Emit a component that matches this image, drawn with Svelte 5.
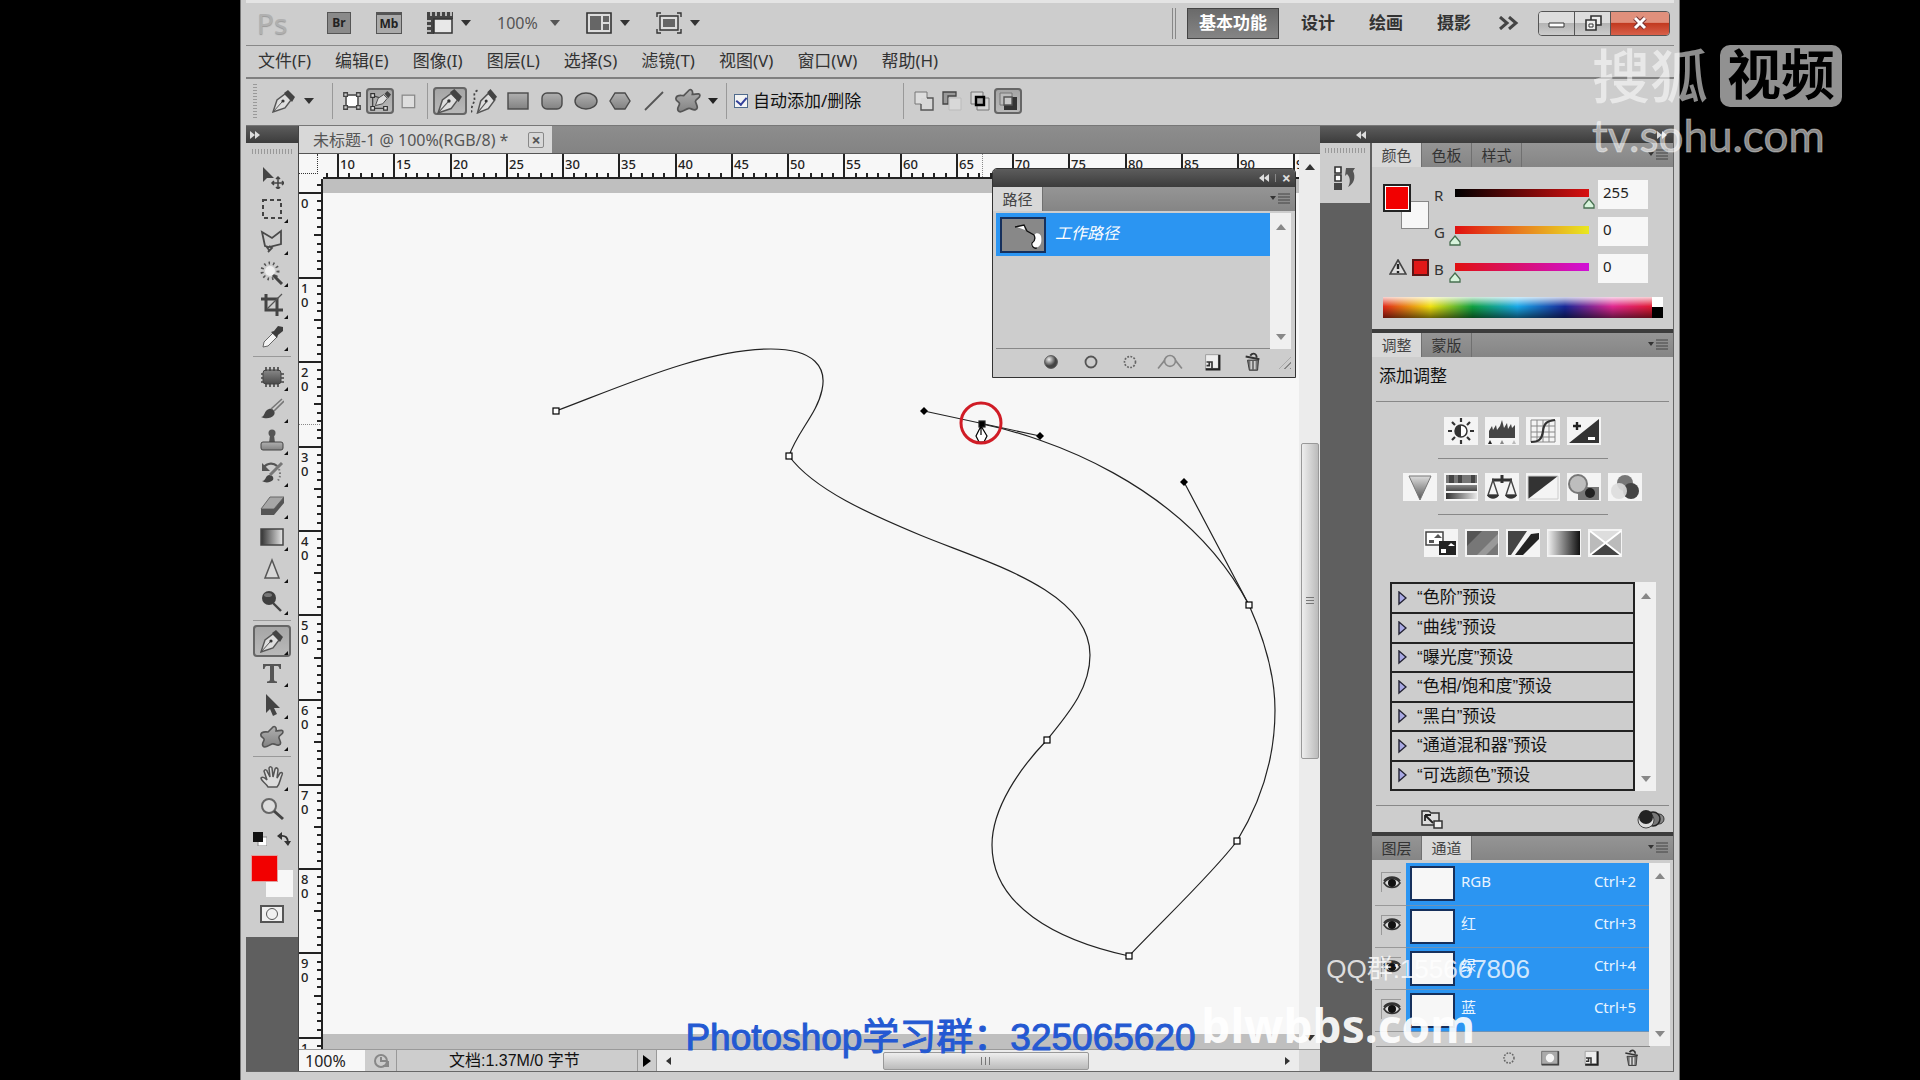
<script>
  const icons = {
    move: '<path d="M3 2v15l4-4 7 0z" fill="#444"/><path d="M18 12v12M12 18h12M16 14l2-2 2 2M16 22l2 2 2-2M14 16l-2 2 2 2M22 16l2 2-2 2" fill="none" stroke="#444" stroke-width="1.5"/>',
    marquee: '<rect x="3" y="3" width="18" height="18" fill="none" stroke="#444" stroke-width="2" stroke-dasharray="4 3"/>',
    lasso: '<path d="M2 3l10 6 9-7v13l-12 3-4-1z M9 17l3 2-4 4M6 17l3 4" fill="none" stroke="#4a4a4a" stroke-width="1.8"/>',
    wand: '<circle cx="10" cy="10" r="8" fill="none" stroke="#555" stroke-width="3" stroke-dasharray="1.5 3"/><circle cx="10" cy="10" r="5" fill="#eee"/><path d="M13 14l9 9" stroke="#444" stroke-width="3"/>',
    crop: '<path d="M6 1v16h17M1 6h16v17" fill="none" stroke="#444" stroke-width="3"/><path d="M7 16L22 1" stroke="#555" stroke-width="1.3"/>',
    dropper: '<path d="M3 22l1-5 9-9 4 4-9 9z" fill="#f4f4f4" stroke="#666"/><path d="M11 7l3-1 4-5 5 1 0 4-5 4-1 3z" fill="#3d3d3d"/>',
    heal: '<rect x="3" y="5" width="18" height="14" rx="3" fill="url(#dark)" stroke="#444"/><path d="M6 2v4M10 2v4M14 2v4M18 2v4M6 18v4M10 18v4M14 18v4M18 18v4M1 9h2M1 13h2M1 17h2M21 9h3M21 13h3M21 17h3" stroke="#444" stroke-width="1.6"/>',
    brush: '<path d="M1 20c4 0 3-7 8-8 4-1 7 3 5 6-3 4-9 4-13 2z" fill="#444"/><path d="M11 12L22 2M14 14L24 4" stroke="#777" stroke-width="1.6"/>',
    stamp: '<circle cx="12" cy="4" r="3.5" fill="#555"/><path d="M10 6h4l1 8H9z" fill="#555"/><rect x="1" y="13" width="22" height="8" rx="2" fill="url(#mid)" stroke="#444"/>',
    history: '<path d="M2 20c4 0 3-5 7-6 4 0 5 3 4 5-3 3-8 3-11 1z" fill="#444"/><path d="M10 14L22 2" stroke="#777" stroke-width="3"/><path d="M3 7c5-6 11-5 14-2" fill="none" stroke="#555" stroke-width="2.4"/><path d="M2 2v8h8z" fill="#555"/><path d="M19 8c2 6 1 9-2 13" fill="none" stroke="#777" stroke-width="2" stroke-dasharray="1.5 2"/>',
    eraser: '<path d="M10 4h14l-10 12H1z" fill="#a6a6a6" stroke="#666"/><path d="M1 16h13v6H1zM14 16L24 4v6L14 22z" fill="#555"/>',
    gradient: '<rect x="1" y="4" width="22" height="16" fill="url(#fadeX)" stroke="#444" stroke-width="1.5"/>',
    blur: '<path d="M12 3l7 18H5z" fill="#d8d8d8" stroke="#555" stroke-width="1.5"/>',
    dodge: '<circle cx="9" cy="9" r="7" fill="#3f3f3f"/><path d="M13 14l8 8" stroke="#444" stroke-width="2.4"/><ellipse cx="8" cy="6" rx="4" ry="2" fill="#777"/>',
    pen: '<path d="M1 23l4-12 8-6 6 6-6 8z" fill="#dedede" stroke="#555" stroke-width="1.4"/><path d="M1 23l9-10" stroke="#555"/><circle cx="11" cy="12" r="1.6" fill="#333"/><path d="M12 4l4-3 7 7-3 5z" fill="#444"/>',
    freepen: '<path d="M6 23l3-11 7-7 6 6-6 8z" fill="#dedede" stroke="#555" stroke-width="1.4"/><path d="M6 23l8-10" stroke="#555"/><circle cx="14" cy="12" r="1.4" fill="#333"/><path d="M15 4l3-3 6 7-3 4z" fill="#444"/><path d="M6 2C1 5 4 9 3 12s-4 8-2 11" fill="none" stroke="#444" stroke-width="1.6" stroke-dasharray="2 2"/>',
    type: '<path d="M3 3h18v5h-1.5c-.5-2.500-1-3-3-3H14v13c0 2 .5 2 3 2.500V22H7v-1.500c2.500-.5 3-.5 3-2.500V5H7.500c-2 0-2.500.5-3 3H3z" fill="#555"/>',
    arrow: '<path d="M6 1v19l4-4 3 7 4-2-3-6h6z" fill="#444"/>',
    blob: '<path d="M12 3c2-3 5-1 4 3 3 0 7-2 7 1s-5 3-4 6 3 6 0 7-4-2-7-1-7 5-9 2 2-5 1-7-4-2-3-5 4-2 7-2z" fill="url(#mid)" stroke="#555" stroke-width="1.6"/>',
    hand: '<path d="M8 22c-2-4-7-6-7-9 2-2 4 0 6 2L4 6c1-2 3-1 3 0l3 6-1-9c1-2 3-1 3 0l1 9 2-8c1-2 3-1 3 1l-1 8 3-5c2-1 3 0 2 2-2 4-2 9-5 12z" fill="#ddd" stroke="#555" stroke-width="1.5"/>',
    zoom: '<circle cx="9" cy="9" r="7" fill="#ddd" stroke="#666" stroke-width="2"/><path d="M14 14l9 8" stroke="#444" stroke-width="3"/>',
    shapeLayer: '<rect x="6" y="6" width="12" height="12" fill="#fff" stroke="#666"/><path d="M3 3h4v4H3zM17 3h4v4h-4zM3 17h4v4H3zM17 17h4v4h-4z" fill="#ccc" stroke="#444" stroke-width="1.4"/><path d="M7 5h10M7 19h10M5 7v10M19 7v10" stroke="#555"/>',
    paths: '<path d="M4 6v14h14M4 6l12 4" fill="none" stroke="#444" stroke-width="1.4"/><path d="M2 4h4v4H2zM2 18h4v4H2zM16 18h4v4h-4z" fill="#ddd" stroke="#333" stroke-width="1.3"/><path d="M7 17l3-8 6-4 4 4-5 6z" fill="#ddd" stroke="#444"/><path d="M17 4l3-3 4 4-3 4z" fill="#444"/>',
    pixels: '<rect x="5" y="5" width="15" height="15" fill="#dedede" stroke="#888" stroke-width="1.5"/>',
    rect: '<rect x="2" y="4" width="20" height="16" fill="url(#mid)" stroke="#4a4a4a" stroke-width="1.4"/>',
    rrect: '<rect x="2" y="4" width="20" height="16" rx="5" fill="url(#mid)" stroke="#4a4a4a" stroke-width="1.4"/>',
    ellipse: '<ellipse cx="12" cy="12" rx="11" ry="8" fill="url(#mid)" stroke="#4a4a4a" stroke-width="1.4"/>',
    polygon: '<path d="M7 4h10l5 8-5 8H7l-5-8z" fill="url(#mid)" stroke="#4a4a4a" stroke-width="1.4"/>',
    line: '<path d="M3 21L21 3" stroke="#555" stroke-width="1.8"/>',
    add: '<path d="M3 3h12v12H3z" fill="#ddd" stroke="#777"/><path d="M9 9h12v12H9z" fill="#d8d8d8"/><path d="M15 9h6v12H9v-6" fill="none" stroke="#555" stroke-width="1.4"/>',
    subtract: '<path d="M3 15V3h13v4H8v8z" fill="#999" stroke="#444" stroke-width="1.3"/><path d="M9 9h12v12H9z" fill="#d8d8d8" stroke="#bbb"/>',
    intersect: '<path d="M3 3h12v12H3zM9 9h12v12H9z" fill="#d4d4d4" stroke="#777"/><path d="M8 8h8v8H8z" fill="#aaa" stroke="#000" stroke-width="2.4"/>',
    exclude: '<path d="M4 4h12v12H4z" fill="#bbb" stroke="#777"/><path d="M16 8h5v13H8v-5h8z" fill="#333"/><path d="M8 8h8v8H8z" fill="#c8c8c8" stroke="#555" stroke-width="1.4"/>',
    ball: '<circle cx="12" cy="12" r="7" fill="url(#ball)" stroke="#555"/>',
    ring: '<circle cx="12" cy="12" r="6" fill="#ccc" stroke="#555" stroke-width="2"/>',
    dotted: '<circle cx="12" cy="12" r="6" fill="none" stroke="#666" stroke-width="1.8" stroke-dasharray="2 1.5"/>',
    work: '<path d="M1 18L9 8h6l8 10" fill="none" stroke="#888" stroke-width="1.6"/><circle cx="12" cy="11" r="5" fill="#ccc" stroke="#888" stroke-width="1.5"/>',
    mask: '<path d="M2 4h20v16H2z" fill="#aaa" stroke="#666"/><path d="M2 20h20V4" fill="none" stroke="#444" stroke-width="2"/><circle cx="12" cy="12" r="5" fill="#f4f4f4"/>',
    page: '<path d="M5 4h14v15H5z" fill="#eee" stroke="#999"/><path d="M20 4v16H5" fill="none" stroke="#222" stroke-width="2.4"/><path d="M6 12h6v7M9 12v4H6" fill="none" stroke="#333" stroke-width="1.8"/>',
    trash: '<path d="M4 6l15 3M9 5c3-4 7-2 7 2" stroke="#333" stroke-width="2" fill="none"/><path d="M6 10h12l-1 11H8z" fill="#777" stroke="#333"/><path d="M10 11v9M14 11v9" stroke="#ddd" stroke-width="1.5"/>',
  };

  // adjustment buttons are drawn on a 34x28 tile
  const adjustRows = [
    [
      ['亮度/对比度', '<circle cx="17" cy="14" r="6" fill="#fff" stroke="#333" stroke-width="1.5"/><path d="M17 8a6 6 0 0 0 0 12z" fill="#333"/><path d="M17 1v4M17 23v4M4 14h4M26 14h4M8 5l3 3M23 20l3 3M26 5l-3 3M11 20l-3 3" stroke="#333" stroke-width="2.2"/>'],
      ['色阶', '<path d="M4 21V14l3-5 1 4 3-5 1 5 3-4 2-6 2 8 3-5 1 6 3-5 1 4 3-3v13z" fill="#444"/><path d="M3 27l2-4 2 4z" fill="#222"/><path d="M15 27l2-4 2 4z" fill="#888"/><path d="M27 27l2-4 2 4z" fill="#bbb"/>'],
      ['曲线', '<path d="M5 3h24v22H5zM11 3v22M17 3v22M23 3v22M5 9h24M5 15h24M5 20h24" fill="none" stroke="#888"/><path d="M5 25c8 0 11-3 12-11s4-10 12-11" fill="none" stroke="#333" stroke-width="2.2"/>'],
      ['曝光度', '<path d="M32 2v24H2z" fill="#333"/><path d="M6 9h8M10 5v8" stroke="#222" stroke-width="2.4"/><path d="M21 20h7v3h-7z" fill="#fff"/>'],
    ],
    [
      ['自然饱和度', '<path d="M6 3h22L17 27z" fill="url(#vib)" stroke="#777"/>'],
      ['色相/饱和度', '<path d="M2 2h31v8H2z" fill="#777"/><path d="M5 2h5v8H5zM14 2h4v8h-4zM27 2h4v8h-4z" fill="#444"/><path d="M2 12h31v6H2z" fill="url(#dark)"/><path d="M2 20h31v6H2z" fill="url(#fadeX)"/>'],
      ['色彩平衡', '<path d="M17 2v8M7 7h20" stroke="#333" stroke-width="3"/><path d="M8 7L3 22h10zM26 7l-5 15h10z" fill="none" stroke="#444" stroke-width="1.4"/><path d="M2 22h12c-2 5-10 5-12 0zM20 22h12c-2 5-10 5-12 0z" fill="#333"/>'],
      ['黑白', '<path d="M2 3h30L2 26z" fill="#333"/><path d="M2 3h30v23H2z" fill="none" stroke="#ccc"/>'],
      ['照片滤镜', '<path d="M11 14h21v13H11z" fill="#777"/><circle cx="23" cy="20" r="5" fill="#222"/><circle cx="11" cy="11" r="9" fill="#bdbdbd" stroke="#777" stroke-width="2"/>'],
      ['通道混和器', '<circle cx="17" cy="10" r="8" fill="#777"/><circle cx="23" cy="18" r="8" fill="#444"/><circle cx="11" cy="18" r="8" fill="#ddd" opacity=".9"/>'],
    ],
    [
      ['反相', '<path d="M2 3h17v13H2z" fill="#fff" stroke="#444" stroke-width="1.5"/><path d="M15 12h17v14H15z" fill="#222"/><path d="M10 9l4-4 4 4zM5 11h5v3H5z" fill="#555"/><path d="M24 17l3-3 4 3zM17 20h5v4h-5z" fill="#fff"/>'],
      ['色调分离', '<path d="M2 2h31v24H2z" fill="#777"/><path d="M2 2h15L2 17z" fill="#555"/><path d="M33 5v9L21 26h-9z" fill="#999"/>'],
      ['阈值', '<path d="M2 2h19L5 26H2z" fill="#444"/><path d="M9 26L25 5l8-1v6L17 26z" fill="#222"/>'],
      ['渐变映射', '<path d="M1 2h32v24H1z" fill="url(#fadeR)"/>'],
      ['可选颜色', '<path d="M2 2h31v24H2z" fill="#bbb"/><path d="M2 2h31L17 14z" fill="#ddd"/><path d="M2 26h31L17 14z" fill="#444"/><path d="M2 2l31 24M33 2L2 26" stroke="#fff" stroke-width="2"/>'],
    ],
  ];

  const menus = ['文件(F)', '编辑(E)', '图像(I)', '图层(L)', '选择(S)', '滤镜(T)', '视图(V)', '窗口(W)', '帮助(H)'];
  const workspaces = ['设计', '绘画', '摄影'];
  const toolGroups = [
    ['move', 'marquee', 'lasso', 'wand', 'crop', 'dropper'],
    ['heal', 'brush', 'stamp', 'history', 'eraser', 'gradient', 'blur', 'dodge'],
    ['pen', 'type', 'arrow', 'blob'],
    ['hand', 'zoom'],
  ];
  const shapeModes = ['pen', 'freepen', 'rect', 'rrect', 'ellipse', 'polygon', 'line', 'blob'];
  const presets = ['色阶', '曲线', '曝光度', '色相/饱和度', '黑白', '通道混和器', '可选颜色'];
  const channels = [
    { name: 'RGB', key: 'Ctrl+2' },
    { name: '红', key: 'Ctrl+3' },
    { name: '绿', key: 'Ctrl+4' },
    { name: '蓝', key: 'Ctrl+5' },
  ];
  const anchors = [[556, 411], [789, 456], [1047, 740], [1129, 956], [1237, 841], [1249, 605]];

  let activeTool = $state('pen');
  let autoAdd = $state(true);
  let rgb = $state([
    { id: 'R', value: 255 },
    { id: 'G', value: 0 },
    { id: 'B', value: 0 },
  ]);

  const hTicks = Array.from({ length: 87 }, (_, i) => ({ v: i + 9, x: Math.round(15 + (i - 1) * 11.25) }));
  const vTicks = Array.from({ length: 104 }, (_, i) => ({ v: i - 1, y: Math.round(14 + (i - 1) * 8.45) }));
</script>

{#snippet icon(name, size = 24)}
  <svg class="icon" viewBox="0 0 24 24" width={size} height={size} aria-hidden="true">{@html icons[name]}</svg>
{/snippet}

{#snippet tri(dir)}
  <svg class="icon" viewBox="0 0 10 6" width="10" height="6" aria-hidden="true">
    <path d={dir === 'up' ? 'M0 6l5-6 5 6z' : 'M0 0h10L5 6z'} fill="currentColor" />
  </svg>
{/snippet}

{#snippet panelMenu()}
  <button class="panel-menu" aria-label="面板菜单">
    <svg viewBox="0 0 20 12" width="20" height="12"><path d="M0 3h6L3 7z" fill="#333" /><path d="M8 1h12M8 4h12M8 7h12M8 10h12" stroke="#444" /></svg>
  </button>
{/snippet}

{#snippet chevrons(flip)}
  <svg class="icon" viewBox="0 0 10 8" width="10" height="8" aria-hidden="true">
    <path d={flip ? 'M5 0v8L0 4zM10 0v8L5 4z' : 'M0 0l5 4-5 4zM5 0l5 4-5 4z'} fill="#ddd" />
  </svg>
{/snippet}

<svg class="defs" width="0" height="0" aria-hidden="true">
  <defs>
    <linearGradient id="mid" x2="0" y2="1"><stop offset="0" stop-color="#b0b0b0" /><stop offset="1" stop-color="#828282" /></linearGradient>
    <linearGradient id="dark" x2="0" y2="1"><stop offset="0" stop-color="#888" /><stop offset="1" stop-color="#4a4a4a" /></linearGradient>
    <linearGradient id="vib" x2="0" y2="1"><stop offset="0" stop-color="#ddd" /><stop offset="1" stop-color="#555" /></linearGradient>
    <linearGradient id="fadeX"><stop offset="0" stop-color="#333" /><stop offset="1" stop-color="#e8e8e8" /></linearGradient>
    <linearGradient id="fadeR"><stop offset="0" stop-color="#eee" /><stop offset="1" stop-color="#111" /></linearGradient>
    <radialGradient id="ball" cx=".35" cy=".3"><stop offset="0" stop-color="#eee" /><stop offset="1" stop-color="#444" /></radialGradient>
  </defs>
</svg>

<div class="screen">
  <div class="window">
    <header class="titlebar">
      <span class="logo">Ps</span>
      <button class="app-btn br" aria-label="Bridge">Br</button>
      <button class="app-btn mb" aria-label="Mini Bridge">Mb</button>
      <button class="drop rulers" aria-label="查看额外内容">
        <svg viewBox="0 0 26 22" width="26" height="22"><path d="M0 0h26v7H7v15H0z" fill="#444" /><path d="M7 7h18v14H7z" fill="#e8e8e8" stroke="#333" stroke-width="1.5" /><path d="M4 0v4M9 0v4M14 0v4M19 0v4M24 0v4M0 9h4M0 14h4M0 19h4" stroke="#ddd" stroke-width="1.5" /></svg>
        {@render tri()}
      </button>
      <button class="drop zoom">100% {@render tri()}</button>
      <button class="drop" aria-label="排列文档">
        <svg viewBox="0 0 26 22" width="26" height="22"><path d="M1 1h24v20H1z" fill="#ddd" stroke="#333" stroke-width="1.6" /><path d="M4 4h11v14H4zM17 4h6v6h-6zM17 12h6v6h-6z" fill="#666" /></svg>
        {@render tri()}
      </button>
      <button class="drop screenmode" aria-label="屏幕模式">
        <svg viewBox="0 0 26 22" width="26" height="22"><path d="M4 4h18v14H4z" fill="#ddd" stroke="#333" stroke-width="1.4" /><path d="M7 7h12v8H7z" fill="#666" /><path d="M1 5V1h4M21 1h4v4M25 17v4h-4M5 21H1v-4" fill="none" stroke="#333" stroke-width="1.4" /></svg>
        {@render tri()}
      </button>

      <nav class="workspaces" aria-label="工作区">
        <button class="ws active">基本功能</button>
        {#each workspaces as ws}
          <button class="ws">{ws}</button>
        {/each}
        <button class="more" aria-label="更多工作区">
          <svg viewBox="0 0 20 14" width="20" height="14"><path d="M1 1l7 6-7 6M10 1l7 6-7 6" fill="none" stroke="#444" stroke-width="3" /></svg>
        </button>
      </nav>
      <div class="win-btns">
        <button aria-label="最小化"><svg viewBox="0 0 18 14" width="18" height="14"><path d="M1 7h15v4H1z" fill="#fff" stroke="#333" /></svg></button>
        <button aria-label="还原"><svg viewBox="0 0 18 16" width="18" height="16"><path d="M7 1h10v9H7z" fill="#eee" stroke="#333" stroke-width="1.6" /><path d="M2 5h10v10H2z" fill="#eee" stroke="#333" stroke-width="1.6" /><path d="M5 9h4v3H5z" fill="#fff" stroke="#333" /></svg></button>
        <button class="close" aria-label="关闭"><svg viewBox="0 0 16 14" width="16" height="14"><path d="M3 2l10 10M13 2L3 12" stroke="#733" stroke-width="5" /><path d="M3 2l10 10M13 2L3 12" stroke="#fff" stroke-width="3" /></svg></button>
      </div>
    </header>

    <nav class="menubar" aria-label="菜单">
      {#each menus as menu}
        <button>{menu}</button>
      {/each}
    </nav>

    <div class="options">
      <i class="grip"></i>
      <button class="drop preset" aria-label="钢笔工具">{@render icon('pen')} {@render tri()}</button>
      <i class="sep"></i>
      <button class="mode" aria-label="形状图层">{@render icon('shapeLayer', 22)}</button>
      <button class="mode on" aria-label="路径">{@render icon('paths', 22)}</button>
      <button class="mode" aria-label="填充像素">{@render icon('pixels', 20)}</button>
      <i class="sep"></i>
      {#each shapeModes as mode, i}
        <button class="shape" class:on={i === 0} aria-label={mode}>{@render icon(mode, i < 2 || i === 7 ? 26 : 24)}</button>
      {/each}
      <span class="arrow">{@render tri()}</span>
      <i class="sep"></i>
      <label class="check"><input type="checkbox" bind:checked={autoAdd} />自动添加/删除</label>
      <i class="sep wide"></i>
      <button class="mode" aria-label="添加到路径区域">{@render icon('add')}</button>
      <button class="mode" aria-label="从路径区域减去">{@render icon('subtract')}</button>
      <button class="mode" aria-label="交叉路径区域">{@render icon('intersect')}</button>
      <button class="mode on" aria-label="重叠路径区域除外">{@render icon('exclude')}</button>
    </div>

    <div class="body">
      <aside class="tools">
        <div class="dock-head left">{@render chevrons(false)}</div>
        <div class="toolbox">
          <i class="dots"></i>
          {#each toolGroups as group}
            <div class="tool-group">
              {#each group as tool}
                <button class="tool" class:on={activeTool === tool} aria-label={tool} onclick={() => (activeTool = tool)}>
                  {@render icon(tool)}
                  {#if tool !== 'move' && tool !== 'zoom'}<i class="corner"></i>{/if}
                </button>
              {/each}
            </div>
          {/each}
          <div class="mini">
            <svg viewBox="0 0 14 14" width="14" height="14"><path d="M5 5h9v9H5z" fill="#fff" stroke="#888" /><path d="M0 0h10v10H0z" fill="#111" /></svg>
            <svg viewBox="0 0 14 14" width="14" height="14"><path d="M3 4c6-1 8 2 8 7" fill="none" stroke="#333" stroke-width="1.8" /><path d="M0 4l5-4v8zM7 9h7l-3 5z" fill="#333" /></svg>
          </div>
          <div class="swatches"><i class="bg"></i><i class="fg"></i></div>
          <button class="quick" aria-label="快速蒙版"><i></i></button>
        </div>
      </aside>

      <main class="doc">
        <div class="tabbar">
          <div class="doc-tab">未标题-1 @ 100%(RGB/8) * <button aria-label="关闭文档">×</button></div>
        </div>
        <div class="view">
          <div class="corner-box"></div>
          <svg class="ruler-h" width="100%" height="25">
            {#each hTicks as t}
              <line x1={t.x} x2={t.x} y1={t.v % 5 === 0 ? 0 : 19} y2="24" />
              {#if t.v % 5 === 0}<text x={t.x + 2} y="15">{t.v}</text>{/if}
            {/each}
            <line class="guide" x1="659" x2="659" y1="0" y2="24" />
            <line class="edge" x1="0" x2="100%" y1="24" y2="24" />
          </svg>
          <svg class="ruler-v" width="24" height="100%">
            {#each vTicks as t}
              <line y1={t.y} y2={t.y} x1={t.v % 10 === 0 ? 0 : t.v % 5 === 0 ? 15 : 18} x2="23" />
              {#if t.v % 10 === 0}
                {#each String(t.v).split('') as d, i}
                  <text x="2" y={t.y + 15 + i * 14}>{d}</text>
                {/each}
              {/if}
            {/each}
            <line class="guide" x1="0" x2="23" y1="245" y2="245" />
            <line class="edge" x1="23" x2="23" y1="0" y2="100%" />
          </svg>
          <div class="canvas">
            <svg width="100%" height="100%">
              <g transform="translate(-323 -179)" fill="none" stroke="#222" stroke-width="1.2">
                <path d="M556 411C625 385 705 349 771 349C815 349 827 368 822 390C817 414 797 432 789 456C814 490 872 515 920 535C985 562 1090 590 1090 655C1090 690 1066 716 1047 740C1020 768 992 808 992 845C992 905 1055 940 1129 956C1165 918 1213 873 1237 841C1262 800 1275 755 1275 710C1275 670 1262 634 1249 605C1184 482 1041 436 982 424" />
                <path d="M924 411L1040 436M1184 482L1249 605" />
                <path d="M924 407l4 4-4 4-4-4zM1040 432l4 4-4 4-4-4zM1184 478l4 4-4 4-4-4z" fill="#000" stroke="none" />
                {#each anchors as [x, y]}
                  <rect x={x - 3} y={y - 3} width="6" height="6" fill="#fff" stroke="#000" />
                {/each}
                <rect x="979" y="421" width="6" height="6" fill="#000" />
                <path d="M981 426l-5 10 3 6h5l3-6zM979 443h6M981 426v9" fill="#fff" stroke="#000" />
                <circle cx="981" cy="423" r="20" stroke="#d01c26" stroke-width="3" />
              </g>
            </svg>
          </div>
          <div class="vscroll">
            {@render tri('up')}
            <i class="thumb"></i>
            {@render tri()}
          </div>
        </div>
        <footer class="status">
          <input class="pct" value="100%" aria-label="缩放比例" />
          <span class="clock"><svg viewBox="0 0 16 16" width="16" height="16"><circle cx="8" cy="8" r="6" fill="#ccc" stroke="#888" stroke-width="2" /><path d="M8 4v4h5M10 13h5V8" fill="none" stroke="#888" stroke-width="2" /></svg></span>
          <span class="info">文档:1.37M/0 字节</span>
          <button class="play" aria-label="状态选项"><svg viewBox="0 0 8 12" width="8" height="12"><path d="M0 0l8 6-8 6z" /></svg></button>
          <div class="hscroll">
            <svg viewBox="0 0 5 8" width="5" height="8"><path d="M5 0v8L0 4z" fill="#333" /></svg>
            <i class="thumb"></i>
            <svg viewBox="0 0 5 8" width="5" height="8"><path d="M0 0v8l5-4z" fill="#333" /></svg>
          </div>
          <i class="size-corner"></i>
        </footer>

        <section class="paths-panel">
          <div class="paths-head">{@render chevrons(true)}<i></i><button aria-label="关闭面板">×</button></div>
          <div class="tabs"><button class="tab active">路径</button>{@render panelMenu()}</div>
          <div class="paths-body">
            <div class="paths-list">
              <div class="path-row">
                <svg viewBox="0 0 46 36" width="46" height="36"><path d="M1 1h44v34H1z" fill="#888" stroke="#16305c" stroke-width="2" /><path d="M17 10l7-2 1 5z M34 18c2-3 6-2 7 1 1 6 0 9-3 11-4 2-8 0-7-4 4-1 5-4 3-8z" fill="#fff" /><path d="M15 10l9-2 3 6 7 4c2 4 1 6-2 8-1 3 2 6 5 5" fill="none" stroke="#111" stroke-width="1.3" /></svg>
                <em>工作路径</em>
              </div>
            </div>
            <div class="list-scroll">{@render tri('up')}{@render tri()}</div>
          </div>
          <div class="paths-foot">
            {#each ['ball', 'ring', 'dotted', 'work', 'page', 'trash'] as name}
              <button aria-label={name}>{@render icon(name, name === 'work' ? 26 : 22)}</button>
            {/each}
            <i class="resize"></i>
          </div>
        </section>
      </main>

      <aside class="dock">
        <div class="dock-head">{@render chevrons(true)}<span>{@render chevrons(false)}</span></div>
        <div class="dock-main">
          <div class="icon-dock">
            <i class="dots"></i>
            <button aria-label="历史记录">
              <svg viewBox="0 0 24 26" width="24" height="26"><path d="M2 2h6v6H2zM2 10h6v6H2z" fill="#fff" stroke="#333" stroke-width="1.6" /><path d="M1 18h8v7H1z" fill="#444" /><path d="M13 3h9l-2 3c3 6 1 13-5 16 3-5 2-10-1-13l-2 2z" fill="#555" /></svg>
            </button>
          </div>
          <div class="panels">
            <section>
              <div class="tabs"><button class="tab active">颜色</button><button class="tab">色板</button><button class="tab">样式</button>{@render panelMenu()}</div>
              <div class="color-body">
                <div class="color-row">
                  <div class="color-left">
                    <div class="pair"><i class="back"></i><i class="front"></i></div>
                    <div class="warn">
                      <svg viewBox="0 0 18 16" width="18" height="16"><path d="M9 1l8 14H1z" fill="#ddd" stroke="#444" stroke-width="1.6" /><path d="M9 5v5M9 12v2" stroke="#222" stroke-width="2.4" /></svg>
                      <i></i>
                    </div>
                  </div>
                  <div class="sliders">
                    {#each rgb as c}
                      <label for={'num-' + c.id}>{c.id}</label>
                      <input class={'range ' + c.id} type="range" min="0" max="255" bind:value={c.value} aria-label={c.id} />
                      <input class="num" id={'num-' + c.id} bind:value={c.value} />
                    {/each}
                  </div>
                </div>
                <div class="spectrum"><i></i></div>
              </div>
            </section>

            <section class="adjust">
              <div class="tabs"><button class="tab active">调整</button><button class="tab">蒙版</button>{@render panelMenu()}</div>
              <h2>添加调整</h2>
              <div class="adj-rows">
                {#each adjustRows as row}
                  <div class="adj-row">
                    {#each row as [label, art]}
                      <button aria-label={label}><svg viewBox="0 0 34 28" width="34" height="28">{@html art}</svg></button>
                    {/each}
                  </div>
                {/each}
              </div>
              <div class="preset-box">
                <ul>
                  {#each presets as p}
                    <li><svg viewBox="0 0 9 15" width="9" height="15"><path d="M1 1l7 6-7 6z" fill="#a9a9e4" stroke="#223" stroke-width="1.4" /></svg>“{p}”预设</li>
                  {/each}
                </ul>
                <div class="list-scroll">{@render tri('up')}{@render tri()}</div>
              </div>
              <div class="adj-foot">
                <svg viewBox="0 0 24 20" width="24" height="20"><path d="M2 2h7l2 2h8v12H2z" fill="#ddd" stroke="#333" stroke-width="1.5" /><path d="M5 6v6M5 6h6M5 6l8 8" stroke="#222" stroke-width="1.8" /><path d="M14 12h8v7h-8z" fill="#eee" stroke="#333" stroke-width="1.5" /></svg>
                <svg viewBox="0 0 28 20" width="28" height="20"><circle cx="22" cy="10" r="5" fill="#888" stroke="#333" /><circle cx="16" cy="10" r="7" fill="#777" stroke="#222" stroke-width="1.5" /><circle cx="9" cy="11" r="8" fill="#ddd" stroke="#444" /><circle cx="9" cy="8" r="7" fill="#222" /></svg>
              </div>
            </section>

            <section class="channels">
              <div class="tabs"><button class="tab">图层</button><button class="tab active">通道</button>{@render panelMenu()}</div>
              <div class="chan-body">
                <table>
                  <tbody>
                    {#each channels as ch}
                      <tr>
                        <td class="eye"><span><svg viewBox="0 0 18 14" width="18" height="14"><path d="M1 7c4-6 12-6 16 0-4 6-12 6-16 0z" fill="#ddd" stroke="#333" stroke-width="1.5" /><path d="M1 5c4-5 12-5 16 0" fill="none" stroke="#333" stroke-width="2" /><circle cx="9" cy="7" r="4" fill="#111" /></svg></span></td>
                        <td class="thumb-cell"><i></i></td>
                        <td>{ch.name}</td>
                        <td class="key">{ch.key}</td>
                      </tr>
                    {/each}
                  </tbody>
                </table>
                <div class="list-scroll">{@render tri('up')}{@render tri()}</div>
              </div>
              <div class="chan-foot">
                {#each ['dotted', 'mask', 'page', 'trash'] as name}
                  <button aria-label={name}>{@render icon(name, 20)}</button>
                {/each}
              </div>
            </section>
          </div>
        </div>
      </aside>
    </div>
  </div>

  <div class="sohu">
    <div class="sohu-top"><span>搜狐</span><b>视频</b></div>
    <div class="sohu-url">tv.sohu.com</div>
  </div>
  <div class="mark-qq">QQ群:155667806</div>
  <div class="mark-url">blwbbs.com</div>
  <div class="mark-blue">Photoshop学习群：325065620</div>
</div>

<style>
  :global(body) { background: #000; }
  .defs { position: absolute; }
  .screen { position: relative; min-height: 100vh; padding: 0 12.5vw; background: #000; box-sizing: border-box; overflow: hidden; font: 16px/20px "Noto Sans", "Noto Sans CJK SC", sans-serif; color: #333; }
  .screen * { box-sizing: border-box; }
  .screen button { margin: 0; padding: 0; border: 0; background: none; font: inherit; color: inherit; cursor: pointer; }
  i { display: block; font-style: normal; }
  svg { display: block; flex: none; }

  .window { display: flex; flex-direction: column; min-height: 100vh; padding: 0 5px 8px; background: #cdcdcd; border: solid #777; border-width: 0 1px; }

  .titlebar { display: flex; align-items: center; height: 46px; padding: 0 0 2px 11px; border-top: 3px solid #e4e4e4; border-bottom: 1px solid #888; }
  .logo { width: 70px; font-size: 28px; line-height: 36px; color: #b0b0b0; text-shadow: 0 1px 1px #999; }
  .screen .app-btn { width: 24px; height: 22px; border: 1px solid #555; background: #8a8a8a; font-size: 12px; font-weight: 700; line-height: 18px; color: #222; }
  .screen .mb { width: 26px; margin: 0 25px; background: #aaa; border-top-width: 3px; }
  .drop { display: flex; align-items: center; gap: 8px; margin-right: 26px !important; color: #333; }
  .zoom { gap: 12px; color: #555 !important; }
  .workspaces { display: flex; align-items: center; gap: 34px; margin-left: auto; padding-left: 11px; border-left: 4px double #888; }
  .screen .ws { height: 31px; font-size: 17px; font-weight: 700; }
  .screen .ws.active { width: 92px; margin-right: -12px; border: 1px solid #444; background: linear-gradient(#6a6a6a, #858585); color: #fff; }
  .more { margin-left: -6px !important; }
  .win-btns { display: flex; height: 25px; margin: 0 4px 0 19px; border: 1px solid #555; border-radius: 4px; overflow: hidden; }
  .win-btns button { display: flex; align-items: center; justify-content: center; width: 36px; border-right: 1px solid #555; background: linear-gradient(#ddd 50%, #b4b4b4 50%, #ccc); }
  .screen .win-btns .close { width: 58px; border-right: 0; background: linear-gradient(#e0907c 45%, #c23a20 50%, #d8604a); }

  .menubar { display: flex; align-items: center; gap: 24px; height: 33px; padding: 0 0 2px 12px; border-bottom: 2px solid #808080; }
  .menubar button { font-size: 17px; }

  .options { display: flex; align-items: center; height: 47px; padding: 0 0 2px 7px; border-bottom: 1px solid #777; }
  .grip { width: 4px; height: 34px; margin-right: 15px; background: repeating-linear-gradient(#999 0 1px, transparent 1px 3px); }
  .preset { margin-right: 13px !important; }
  .preset, .preset + .sep { flex: none; }
  .sep { width: 1px; height: 36px; margin: 0 5px; background: #999; }
  .sep.wide { margin: 0 6px 0 42px; }
  .mode, .shape { display: flex; align-items: center; justify-content: center; height: 26px; width: 28px; border-radius: 4px; }
  .shape { width: 34px; height: 28px; }
  .mode.on, .shape.on, .tool.on { background: linear-gradient(#a4a4a4, #bbb) !important; box-shadow: inset 0 0 0 2px #666; }
  .arrow { margin: 0 3px; color: #222; }
  .check { display: flex; align-items: center; gap: 5px; margin-left: 2px; font-size: 17px; color: #111; }
  .check input { width: 14px; height: 14px; margin: 0; appearance: none; border: 1px solid #4f6a8c; background: #f4f4f4; }
  .check input:checked::after { content: ""; display: block; width: 5px; height: 8px; margin: 0 0 0 3px; border: solid #33409a; border-width: 0 2px 2px 0; transform: rotate(40deg); }

  .body { flex: 1; display: grid; grid-template-columns: 52px 1fr 353px; background: #5f5f5f; border: solid #666; border-width: 0 1px 1px 0; }
  .dock-head { display: flex; align-items: center; justify-content: space-between; height: 17px; padding: 0 6px 0 36px; background: linear-gradient(#5c5c5c, #3c3c3c); }
  .dock-head.left { padding-left: 4px; }
  .toolbox { display: flex; flex-direction: column; align-items: center; padding-top: 6px; padding-bottom: 14px; background: #cdcdcd; }
  .dots { width: 40px; height: 5px; background: repeating-linear-gradient(90deg, #999 0 1px, transparent 1px 3px); }
  .tool-group { display: flex; flex-direction: column; padding-bottom: 3px; margin-bottom: 4px; border-bottom: 1px solid #999; }
  .tool-group:first-of-type { padding-top: 7px; }
  .tool-group:nth-of-type(4) { border-bottom: 0; margin: 0; padding: 0; }
  .tool { position: relative; display: flex; align-items: center; justify-content: center; width: 38px; height: 32px; border-radius: 4px; }
  .corner { position: absolute; right: 3px; bottom: 2px; width: 4px; height: 4px; background: #111; clip-path: polygon(100% 0, 100% 100%, 0 100%); }
  .mini { display: flex; justify-content: space-between; width: 38px; padding: 7px 0; }
  .swatches { position: relative; width: 42px; height: 44px; }
  .swatches i { position: absolute; width: 27px; height: 27px; }
  .swatches .fg { left: 0; top: 2px; background: #f20000; border: 1px solid #e0a0a0; }
  .swatches .bg { right: 0; bottom: 0; background: #f7f7f7; }
  .screen .quick { width: 24px; height: 18px; margin-top: 8px; background: #f0f0f0; border: 2px solid #555; }
  .quick i { width: 12px; height: 12px; margin: 1px auto; border: 1px solid #555; border-radius: 50%; }

  .doc { position: relative; display: flex; flex-direction: column; min-width: 0; border-left: 1px solid #444; }
  .tabbar { height: 28px; background: linear-gradient(#8d8d8d, #838383); border-bottom: 1px solid #555; }
  .doc-tab { display: flex; align-items: center; justify-content: space-between; width: 253px; height: 27px; padding: 0 8px 0 14px; background: #d8d8d8; font-size: 16px; color: #555; white-space: nowrap; }
  .screen .doc-tab button { width: 16px; height: 16px; border: 1px solid #888; line-height: 12px; font-weight: 700; border-radius: 2px; }
  .view { flex: 1; display: grid; grid-template: 25px 1fr / 24px 1fr 21px; background: #f7f7f7; }
  .corner-box { margin: 0 5px 5px 0; border: dotted #333; border-width: 0 1px 1px 0; }
  .ruler-h, .ruler-v { overflow: hidden; }
  .ruler-v { position: absolute; top: 53px; bottom: 22px; height: calc(100% - 75px); }
  .ruler-h line, .ruler-v line { stroke: #222; stroke-width: 2; shape-rendering: crispEdges; }
  .ruler-h .guide, .ruler-v .guide { stroke: #888; stroke-width: 1; stroke-dasharray: 1 1; }
  .ruler-h text, .ruler-v text { font-size: 13px; font-weight: 500; fill: #222; }
  .canvas { position: relative; grid-area: 2 / 2; border: solid #bfbfbf; border-width: 14px 0 15px; background: #f7f7f7; }
  .canvas svg { position: absolute; top: -14px; left: 0; height: calc(100% + 14px); }
  .vscroll { grid-area: 1 / 3 / 3 / 4; display: flex; flex-direction: column; align-items: center; padding: 10px 0 8px; background: #ececec; color: #333; }
  .vscroll .thumb { flex: 0 0 36%; width: 18px; margin: 273px 0 auto; border: 1px solid #999; border-radius: 2px; background: repeating-linear-gradient(#777 0 1px, transparent 1px 3px) center / 8px 8px no-repeat, linear-gradient(90deg, #eee, #bbb); }
  .status { display: flex; align-items: stretch; height: 22px; background: #cdcdcd; border-top: 1px solid #999; }
  .pct { width: 66px; padding: 0 6px; border: 0; background: #f7f7f7; font: inherit; color: #222; }
  .clock { display: flex; align-items: center; justify-content: center; width: 32px; border-right: 1px solid #999; }
  .info { width: 241px; padding-left: 52px; color: #111; font: 16px/22px "Liberation Sans", "Noto Sans CJK SC", sans-serif; border-right: 1px solid #999; white-space: nowrap; }
  .screen .play { display: flex; align-items: center; justify-content: center; width: 19px; border-right: 1px solid #999; }
  .hscroll { flex: 1; display: flex; align-items: center; padding: 0 9px; background: #ececec; }
  .hscroll .thumb { width: 33%; height: 18px; margin: 0 auto 0 34%; border: 1px solid #999; border-radius: 2px; background: repeating-linear-gradient(90deg, #777 0 1px, transparent 1px 4px) center / 10px 8px no-repeat, linear-gradient(#eee, #bbb); }
  .size-corner { width: 21px; background: #d8d8d8; }

  .tabs { display: flex; height: 24px; background: linear-gradient(#959595, #858585); }
  .screen .tab { width: 50px; border-right: 1px solid #707070; font-size: 15px; line-height: 20px; color: #333; }
  .screen .tab.active { background: #d8d8d8; color: #444; }
  .panel-menu { margin: 0 5px 0 auto !important; }
  .list-scroll { display: flex; flex-direction: column; align-items: center; justify-content: space-between; width: 21px; padding: 11px 0 9px; background: #f0f0f0; color: #888; }

  .paths-panel { position: absolute; right: 24px; top: 42px; width: 304px; border: 1px solid #333; border-radius: 5px 5px 0 0; background: #cdcdcd; overflow: hidden; }
  .paths-head { display: flex; align-items: center; justify-content: flex-end; gap: 6px; height: 18px; padding-right: 4px; background: linear-gradient(#5c5c5c, #3c3c3c); color: #ddd; }
  .paths-head i { width: 1px; height: 8px; background: #888; }
  .screen .paths-head button { font-weight: 700; line-height: 14px; color: #ddd; }
  .paths-body { display: flex; height: 138px; padding: 2px 4px 0 3px; }
  .paths-list { flex: 1; border-bottom: 1px solid #888; }
  .path-row { display: flex; align-items: center; gap: 9px; height: 43px; padding-left: 4px; background: #2b95f2; color: #fff; font-size: 16px; }
  .path-row em { margin-bottom: 4px; }
  .paths-foot { position: relative; display: grid; grid-template-columns: 41px 40px 38px 42px 42px 40px; justify-items: center; align-items: center; height: 28px; padding: 0 0 9px 37px; }
  .resize { position: absolute; right: 4px; bottom: 8px; width: 12px; height: 12px; background: repeating-linear-gradient(135deg, #888 0 1px, transparent 1px 4px); clip-path: polygon(100% 0, 100% 100%, 0 100%); }

  .dock { display: flex; flex-direction: column; }
  .dock-main { flex: 1; display: grid; grid-template-columns: 50px 1fr; gap: 2px; }
  .icon-dock { display: flex; flex-direction: column; align-items: center; gap: 12px; align-self: start; height: 60px; padding-top: 5px; background: #cdcdcd; }
  .panels { display: flex; flex-direction: column; gap: 4px; background: #3c3c3c; }
  .panels section { background: #cdcdcd; }
  .color-body { padding: 13px 10px 11px 11px; }
  .color-row { display: flex; gap: 4px; }
  .color-left { width: 47px; }
  .pair { position: relative; height: 48px; margin-top: 4px; }
  .pair i { position: absolute; width: 28px; height: 28px; }
  .pair .front { left: 0; top: 0; border: 2px solid #222; box-shadow: inset 0 0 0 1px #fff; background: #f20000; }
  .pair .back { left: 18px; top: 17px; border: 1px solid #888; background: #f7f7f7; }
  .warn { display: flex; gap: 5px; margin: 27px 0 0 6px; }
  .warn i { width: 17px; height: 17px; border: 2px solid #5c1515; background: #e01818; }
  .sliders { display: grid; grid-template-columns: 14px 146px 50px; gap: 8px 1px; align-items: center; font-size: 15px; color: #333; }
  .range { appearance: none; width: 146px; height: 20px; margin: 0; background-position: 6px 4px; background-size: calc(100% - 12px) 8px; background-repeat: no-repeat; background-color: transparent; }
  .range.R { background-image: linear-gradient(90deg, #000, #d81010); }
  .range.G { background-image: linear-gradient(90deg, #e01010, #e88020 50%, #e8e820); }
  .range.B { background-image: linear-gradient(90deg, #e01010, #d010d8); }
  .range::-webkit-slider-thumb { appearance: none; width: 12px; height: 11px; margin-top: 17px; background: url("data:image/svg+xml,%3Csvg xmlns='http://www.w3.org/2000/svg' viewBox='0 0 12 11'%3E%3Cpath d='M6 1l5 6v3H1V7z' fill='%23d8f4dc' stroke='%23476f50' stroke-width='1.3'/%3E%3C/svg%3E"); }
  .num { width: 50px; height: 29px; margin-left: 2px; padding: 0 5px 5px; border: 0; background: #f7f7f7; font: 15px "Noto Sans", sans-serif; color: #222; }
  .spectrum { display: flex; justify-content: flex-end; height: 21px; margin-top: 14px; background: linear-gradient(rgba(255, 255, 255, .8), transparent 45%, rgba(0, 0, 0, .55)), linear-gradient(90deg, #e02818, #f0e010 17%, #10a040 32%, #18a8e8 48%, #182898 65%, #e02890 82%, #e01818); }
  .spectrum i { width: 11px; background: linear-gradient(#fff 50%, #000 50%); }

  h2 { margin: 0 4px; padding: 9px 3px 15px; border-bottom: 1px solid #888; font: 17px/20px "Noto Sans", "Noto Sans CJK SC", sans-serif; color: #111; }
  .adj-rows { padding-top: 15px; }
  .adj-row { display: flex; justify-content: center; gap: 7px; width: 246px; margin: 0 auto; padding-bottom: 14px; }
  .adj-row button { background: #f4f4f4; }
  .adj-row:not(:last-child) { margin-bottom: 14px; background: linear-gradient(#888, #888) bottom / 170px 1px no-repeat; }
  .preset-box { display: flex; margin: 11px 17px 0 18px; }
  ul { flex: 1; margin: 0; padding: 0; list-style: none; border: solid #222; border-width: 1px 2px 2px; }
  li { display: flex; align-items: center; height: 29px; padding-left: 6px; border-top: 1px solid #222; font: 17px/20px "Liberation Sans", "Noto Sans CJK SC", sans-serif; color: #111; }
  li + li { border-top-width: 2px; }
  li:nth-child(even) { height: 30px; }
  li svg { margin-right: 10px; }
  .adj-foot { display: flex; align-items: center; justify-content: space-between; height: 27px; margin: 14px 4px 0; padding: 0 4px 0 44px; border-top: 1px solid #888; }

  .channels { flex: 1; display: flex; flex-direction: column; }
  .chan-body { flex: 1; display: flex; align-items: stretch; justify-content: space-between; margin: 3px 3px 0; }
  .chan-body .list-scroll { padding-top: 10px; }
  table { flex: 1; align-self: flex-start; border-collapse: collapse; color: #e8f4ff; font-size: 15px; }
  td { height: 42px; padding: 0; border-bottom: 1px solid #6d93b8; background: #2b95f2; }
  td:nth-child(3) { padding: 0 0 6px 5px; }
  .eye { width: 31px; background: #cdcdcd; border-bottom-color: #999; }
  .eye span { display: flex; align-items: center; justify-content: center; width: 20px; height: 20px; margin: 0 0 3px 6px; border: solid #999; border-width: 1px 0 0 1px; }
  .thumb-cell { width: 50px; }
  .thumb-cell i { width: 45px; height: 35px; margin-left: 4px; border: 2px solid #16305c; background: #f7f7f7; }
  .key { padding: 0 13px 6px 0; text-align: right; }
  .chan-foot { display: flex; align-items: center; justify-content: flex-end; gap: 21px; height: 25px; margin: 0 23px 0 4px; padding: 0 8px 2px 0; border-top: 1px solid #888; }

  .sohu, .mark-qq, .mark-url, .mark-blue { position: absolute; white-space: nowrap; pointer-events: none; }
  .sohu { right: 78px; top: 45px; width: 250px; color: rgba(255, 255, 255, .55); }
  .sohu-top { display: flex; justify-content: space-between; align-items: center; font-size: 58px; font-weight: 500; line-height: 62px; }
  .sohu-top b { width: 122px; height: 62px; border-radius: 10px; background: #919191; color: #000; font-size: 54px; line-height: 58px; text-align: center; }
  .sohu-url { margin-top: 8px; font: 44px/40px Lato, sans-serif; -webkit-text-stroke: 1px rgba(255, 255, 255, .4); }
  .mark-qq { right: 390px; bottom: 95px; font: 26px/32px "Liberation Sans", "Noto Sans CJK SC", sans-serif; color: rgba(255, 255, 255, .8); }
  .mark-url { right: 445px; bottom: 27px; font: 700 46px/56px "Noto Sans", sans-serif; color: rgba(255, 255, 255, .92); }
  .mark-blue { left: 35.7vw; bottom: 14px; font: 37px/56px "Liberation Sans", "Noto Sans CJK SC", sans-serif; color: #2459d2; -webkit-text-stroke: 1px #2459d2; }
</style>
